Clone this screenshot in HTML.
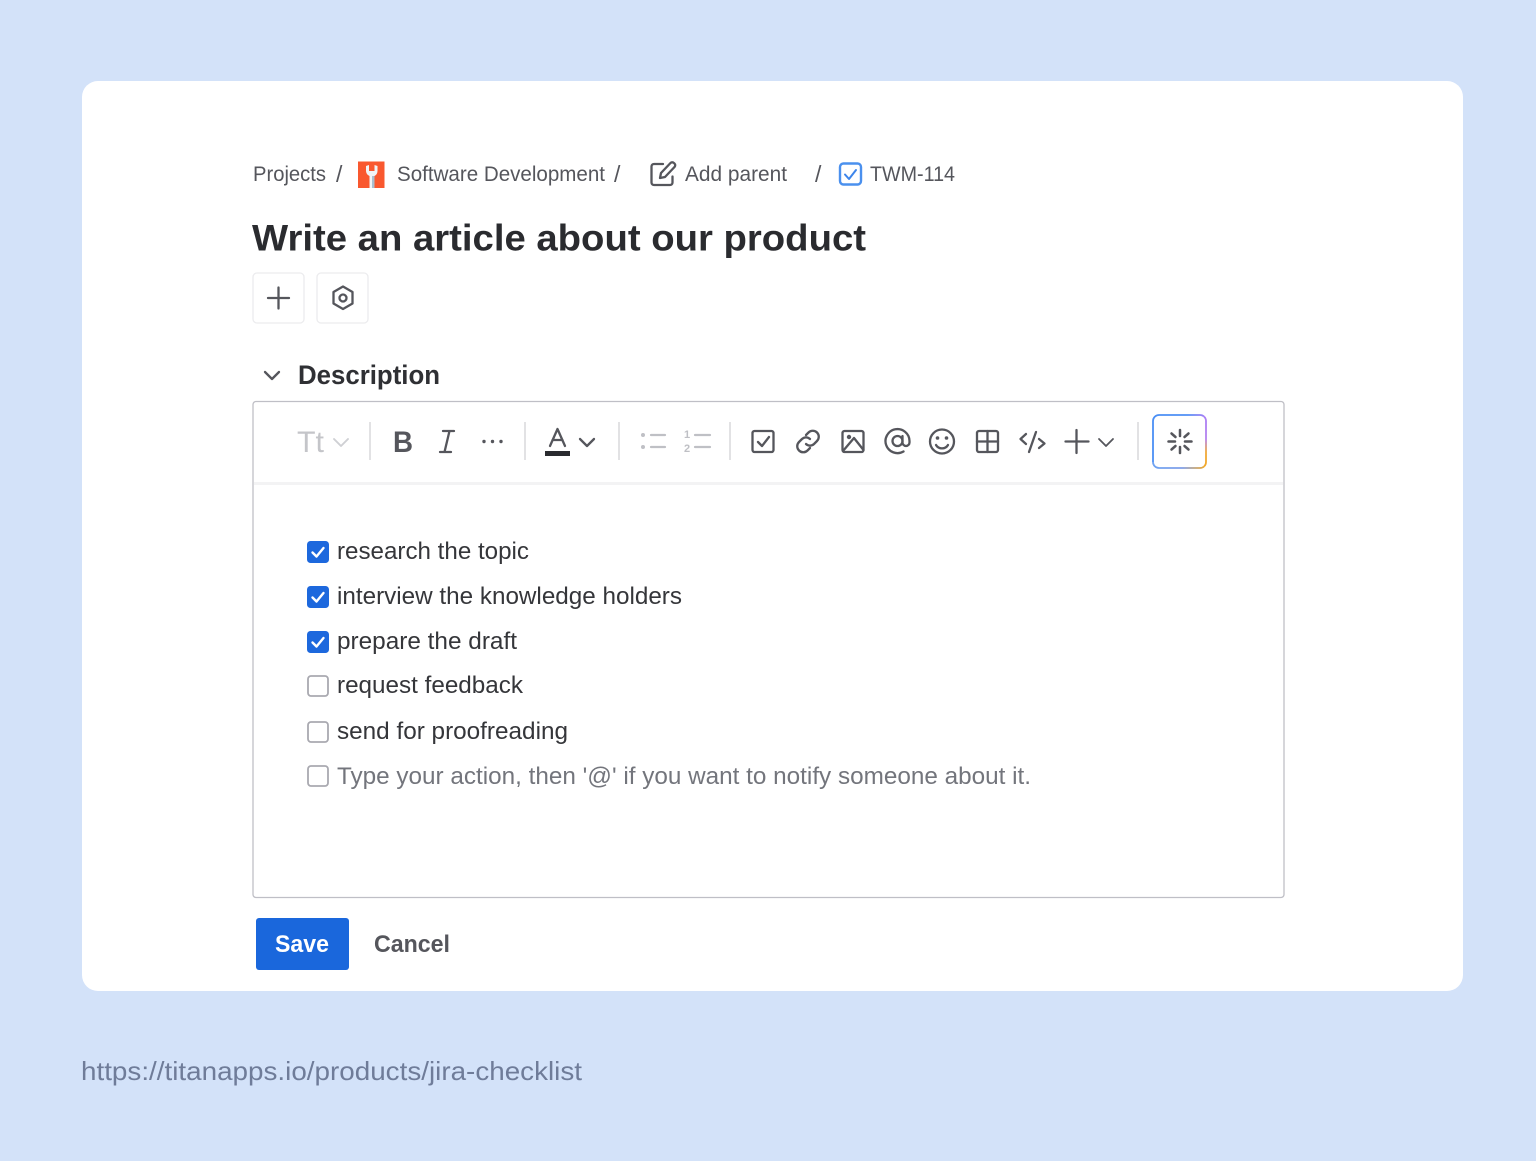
<!DOCTYPE html>
<html lang="en">
<head>
<meta charset="utf-8">
<title>Write an article about our product</title>
<style>
html,body{margin:0;padding:0;background:#d3e2f9;width:1536px;height:1161px;overflow:hidden}
svg{display:block}
text{font-family:"Liberation Sans",sans-serif}
.ic{fill:none;stroke:#55565c;stroke-width:2.3;stroke-linecap:round;stroke-linejoin:round}
.lt{fill:none;stroke:#bfc0c5;stroke-width:2.2;stroke-linecap:round;stroke-linejoin:round}
.sep{stroke:#e2e2e4;stroke-width:2}
</style>
</head>
<body>
<svg width="1536" height="1161" viewBox="0 0 1536 1161" xmlns="http://www.w3.org/2000/svg">
<defs>
<linearGradient id="gt" gradientUnits="userSpaceOnUse" x1="1153" y1="0" x2="1206" y2="0">
<stop offset="0" stop-color="#4a8ff5"/>
<stop offset="0.65" stop-color="#4f8ff5"/>
<stop offset="1" stop-color="#a97df5"/>
</linearGradient>
<linearGradient id="gr" gradientUnits="userSpaceOnUse" x1="0" y1="415" x2="0" y2="468">
<stop offset="0" stop-color="#a97df5"/>
<stop offset="0.45" stop-color="#b583ee"/>
<stop offset="0.7" stop-color="#f0a93a"/>
<stop offset="1" stop-color="#f3a824"/>
</linearGradient>
<linearGradient id="gb" gradientUnits="userSpaceOnUse" x1="1153" y1="0" x2="1206" y2="0">
<stop offset="0" stop-color="#6fa3f2"/>
<stop offset="0.55" stop-color="#7f9ee8"/>
<stop offset="1" stop-color="#f3a824"/>
</linearGradient>
</defs>
<rect width="1536" height="1161" fill="#d3e2f9"/>
<rect x="82" y="81" width="1381" height="910" rx="16" fill="#fff"/>

<!-- breadcrumb -->
<g font-size="21" fill="#55565c">
<text x="253" y="181" textLength="73" lengthAdjust="spacingAndGlyphs">Projects</text>
<text x="336" y="182" font-size="23">/</text>
<text x="397" y="181" textLength="208" lengthAdjust="spacingAndGlyphs">Software Development</text>
<text x="614" y="182" font-size="23">/</text>
<text x="685" y="181" textLength="102" lengthAdjust="spacingAndGlyphs">Add parent</text>
<text x="815" y="182" font-size="23">/</text>
<text x="870" y="181" textLength="85" lengthAdjust="spacingAndGlyphs">TWM-114</text>
</g>
<rect x="358" y="161.500" width="26.500" height="26.500" fill="#f9582f"/>
<path d="M366 166L369 165V171H374.500V165L377.500 166V171a5.800 5.800 0 0 1-3 5V188H369.500V176a5.800 5.800 0 0 1-3.500-5z" fill="#f1f4f6"/>
<path d="M372 176h2.500V188H372z" fill="#a9c0d0"/>
<path class="ic" d="M663 164h-9a2.500 2.500 0 0 0-2.500 2.500v16a2.500 2.500 0 0 0 2.500 2.500h16a2.500 2.500 0 0 0 2.500-2.500v-6"/>
<path class="ic" d="M660 178l1-5 9.500-10a2.400 2.400 0 0 1 3.400 0l.6.600a2.400 2.400 0 0 1 0 3.400l-9.500 10z"/>
<rect x="840" y="163.500" width="21" height="21" rx="3.500" fill="none" stroke="#4a90ee" stroke-width="2.400"/>
<path d="M845 174.500l4 4.500 7-9" fill="none" stroke="#3d85eb" stroke-width="2" stroke-linecap="round" stroke-linejoin="round"/>

<!-- title -->
<text x="252" y="250.500" font-size="37" font-weight="700" fill="#2a2b2f" textLength="614" lengthAdjust="spacingAndGlyphs">Write an article about our product</text>

<!-- small buttons -->
<rect x="253" y="273" width="51" height="50" rx="4" fill="#fff" stroke="#ececee" stroke-width="1.300"/>
<rect x="317" y="273" width="51" height="50" rx="4" fill="#fff" stroke="#ececee" stroke-width="1.300"/>
<path class="ic" d="M278.500 287.500v21M268 298h21"/>
<path class="ic" d="M343 286.500l9.500 5.500v11.500l-9.500 5.500-9.500-5.500V292z"/>
<circle class="ic" cx="343" cy="298" r="3.500"/>

<!-- description -->
<path class="ic" d="M265 372l7 7 7-7"/>
<text x="298" y="384" font-size="27" font-weight="700" fill="#2f3034" textLength="142" lengthAdjust="spacingAndGlyphs">Description</text>

<!-- editor -->
<rect x="253" y="401.500" width="1031" height="496" rx="3" fill="#fff" stroke="#bfbfc6" stroke-width="1.300"/>
<rect x="254" y="482" width="1029" height="3" fill="#f3f3f4"/>

<!-- toolbar -->
<text x="297" y="452" font-size="30" fill="#c4c5c9" textLength="27" lengthAdjust="spacingAndGlyphs">Tt</text>
<path d="M334 439l7 7 7-7" fill="none" stroke="#cfd0d4" stroke-width="1.900" stroke-linecap="round" stroke-linejoin="round"/>
<line class="sep" x1="370" y1="422" x2="370" y2="460"/>
<text x="393" y="452" font-size="30" font-weight="700" fill="#55565c" textLength="20" lengthAdjust="spacingAndGlyphs">B</text>
<path class="ic" d="M443 431h11M440 452h11M449.500 431l-5 21"/>
<circle cx="484" cy="441.500" r="1.700" fill="#55565c"/><circle cx="492.500" cy="441.500" r="1.700" fill="#55565c"/><circle cx="501" cy="441.500" r="1.700" fill="#55565c"/>
<line class="sep" x1="525" y1="422" x2="525" y2="460"/>
<path class="ic" d="M550 446l7.500-17 7.500 17M552.500 440h10"/>
<rect x="545" y="451" width="25" height="5" fill="#2a2b2f"/>
<path class="ic" d="M580 439l7 7 7-7"/>
<line class="sep" x1="619" y1="422" x2="619" y2="460"/>
<circle cx="643" cy="435" r="2" fill="#bfc0c5"/><circle cx="643" cy="447" r="2" fill="#bfc0c5"/>
<path class="lt" d="M651 435h14M651 447h14"/>
<text x="684" y="438" font-size="11" font-weight="700" fill="#bfc0c5">1</text>
<text x="684" y="452" font-size="11" font-weight="700" fill="#bfc0c5">2</text>
<path class="lt" d="M695 435h15M695 447h15"/>
<line class="sep" x1="730" y1="422" x2="730" y2="460"/>

<rect class="ic" x="752.500" y="431" width="21" height="21" rx="2"/>
<path class="ic" d="M758 442l4 4 7-9"/>
<path class="ic" d="M806 435l2.500-2.500a5.800 5.800 0 0 1 8.500 8.500l-3 3a5.800 5.800 0 0 1-8 0M810 448l-2.500 2.500a5.800 5.800 0 0 1-8.500-8.500l3-3a5.800 5.800 0 0 1 8 0"/>
<rect class="ic" x="842.500" y="431" width="21" height="21" rx="2"/>
<circle cx="849" cy="437" r="2.200" fill="#55565c"/>
<path class="ic" d="M843 451l11-13 9.500 12"/>
<circle class="ic" cx="897.500" cy="441" r="5"/>
<path class="ic" d="M902.500 436v6.500a3.500 3.500 0 0 0 7 0V441a12 12 0 1 0-6 10.500"/>
<circle class="ic" cx="942" cy="441.500" r="12"/>
<circle cx="937.500" cy="438" r="1.800" fill="#55565c"/><circle cx="946.500" cy="438" r="1.800" fill="#55565c"/>
<path class="ic" d="M936 445a7 7 0 0 0 12 0"/>
<rect class="ic" x="977" y="431" width="21" height="21" rx="2"/>
<path class="ic" d="M987.500 431v21M977 441.500h21"/>
<path class="ic" d="M1026 434l-5.500 5 5.500 5M1039 439l5.500 4.500-5.500 4.500M1036 432l-7 20"/>
<path class="ic" d="M1076.500 430v23M1065.500 441.500h23"/>
<path d="M1099 439l7 7 7-7" fill="none" stroke="#55565c" stroke-width="1.800" stroke-linecap="round" stroke-linejoin="round"/>
<line class="sep" x1="1138" y1="422" x2="1138" y2="460"/>
<rect x="1153" y="415" width="53" height="53" rx="6" fill="#fff"/>
<g fill="none" stroke-width="1.800">
<path d="M1153 462V421a6 6 0 0 1 6-6h41a6 6 0 0 1 4 1.500" stroke="url(#gt)"/>
<path d="M1204 416.500a6 6 0 0 1 2 4.500v41a6 6 0 0 1-2 4.500" stroke="url(#gr)"/>
<path d="M1153 462a6 6 0 0 0 6 6h41a6 6 0 0 0 4-1.500" stroke="url(#gb)"/>
</g>
<path class="ic" stroke-width="2.500" d="M1180 430v6M1180 447v6M1168.500 441.500h6.500M1185 441.500h6.500M1171.500 433.500l4 3.500M1184.500 446l4 3.500M1188.500 433.500l-4 3.500M1175.500 446l-4 3.500" style="stroke-width:2.500"/>

<!-- checklist -->
<g fill="#1d68dd">
<rect x="307" y="541" width="22" height="22" rx="3.500"/>
<rect x="307" y="586" width="22" height="22" rx="3.500"/>
<rect x="307" y="631" width="22" height="22" rx="3.500"/>
</g>
<g fill="none" stroke="#fff" stroke-width="2.400" stroke-linecap="round" stroke-linejoin="round">
<path d="M312.500 552.500l4 4 7-8.500"/>
<path d="M312.500 597.500l4 4 7-8.500"/>
<path d="M312.500 642.500l4 4 7-8.500"/>
</g>
<g fill="#fff" stroke="#a9a9b0" stroke-width="1.800">
<rect x="308" y="676" width="20" height="20" rx="3"/>
<rect x="308" y="722" width="20" height="20" rx="3"/>
<rect x="308" y="766" width="20" height="20" rx="3"/>
</g>
<g font-size="24" fill="#35363a">
<text x="337" y="559" textLength="192" lengthAdjust="spacingAndGlyphs">research the topic</text>
<text x="337" y="604" textLength="345" lengthAdjust="spacingAndGlyphs">interview the knowledge holders</text>
<text x="337" y="649" textLength="180" lengthAdjust="spacingAndGlyphs">prepare the draft</text>
<text x="337" y="693" textLength="186" lengthAdjust="spacingAndGlyphs">request feedback</text>
<text x="337" y="739" textLength="231" lengthAdjust="spacingAndGlyphs">send for proofreading</text>
<text x="337" y="784" fill="#73757c" textLength="694" lengthAdjust="spacingAndGlyphs">Type your action, then '@' if you want to notify someone about it.</text>
</g>

<!-- actions -->
<rect x="256" y="918" width="93" height="52" rx="3" fill="#1a67dc"/>
<text x="275" y="952" font-size="24" font-weight="700" fill="#fff" textLength="54" lengthAdjust="spacingAndGlyphs">Save</text>
<text x="374" y="952" font-size="24" font-weight="700" fill="#55565c" textLength="76" lengthAdjust="spacingAndGlyphs">Cancel</text>

<!-- footer url -->
<text x="81" y="1080" font-size="26" fill="#6f7c99" textLength="501" lengthAdjust="spacingAndGlyphs">https://titanapps.io/products/jira-checklist</text>
</svg>
</body>
</html>
